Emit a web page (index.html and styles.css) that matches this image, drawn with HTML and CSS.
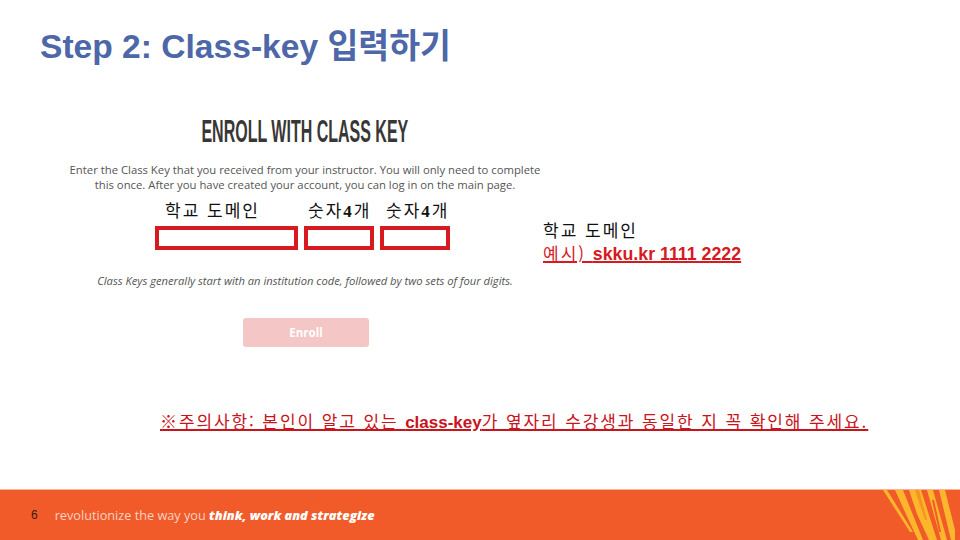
FILE: index.html
```html
<!DOCTYPE html>
<html lang="ko">
<head>
<meta charset="utf-8">
<title>Step 2: Class-key 입력하기</title>
<link rel="stylesheet" href="styles.css">
</head>
<body>
<div class="slide">
  <h1 class="title">Step 2: Class-key 입력하기</h1>
  <div class="main">
    <div class="enroll">
      <h2 class="enroll-title"><span class="enroll-text">ENROLL WITH CLASS KEY</span></h2>
      <p class="intro">Enter the Class Key that you received from your instructor. You will only need to complete<br>this once. After you have created your account, you can log in on the main page.</p>
      <div class="keygrid">
        <span class="lab lab-domain">학교 도메인</span>
        <span class="lab lab-num">숫자<b>4</b>개</span>
        <span class="lab lab-num2">숫자<b>4</b>개</span>
        <span class="box"></span>
        <span class="box"></span>
        <span class="box"></span>
      </div>
      <p class="hint">Class Keys generally start with an institution code, followed by two sets of four digits.</p>
      <div class="btn-row"><span class="btn">Enroll</span></div>
    </div>
    <div class="annot">
      <div class="annot-title">학교 도메인</div>
      <div class="annot-ex"><span class="ko">예시)</span> <b>skku.kr 1111 2222</b></div>
    </div>
  </div>
  <p class="note">※주의사항: 본인이 알고 있는 <b>class-key</b>가 옆자리 수강생과 동일한 지 꼭 확인해 주세요.</p>
  <div class="footer">
    <span class="page">6</span>
    <span class="slogan">revolutionize the way you <b>think, work and strategize</b></span>
    <svg class="brush" width="80" height="50" viewBox="0 0 80 50">
      <polygon points="8,0 12,0 38,42 35,42" fill="#fcb62c"/>
      <polygon points="20,0 28,0 48,50 43,50 30,22" fill="#fcb62c"/>
      <polygon points="34,0 46,0 62,50 54,50 42,24" fill="#fcb62c"/>
      <polygon points="40,0 44,0 52,30 50,30" fill="#f7931e"/>
      <polygon points="52,0 58,0 72,50 66,50" fill="#fcb62c"/>
      <polygon points="64,0 70,0 80,40 80,50 76,50" fill="#fcb62c"/>
      <polygon points="57,10 59,10 66,42 64,42" fill="#f15a29"/>
    </svg>
  </div>
</div>
</body>
</html>
```

FILE: styles.css
```css
html, body {
  margin: 0;
  padding: 0;
  background: #ffffff;
}

.slide {
  width: 960px;
  height: 540px;
  overflow: hidden;
  display: flex;
  flex-direction: column;
  background: #ffffff;
  font-family: "Liberation Sans", Arial, sans-serif;
}

.title {
  margin: 0;
  padding: 27px 0 0 40px;
  font-family: "Liberation Sans", "Noto Sans CJK KR", sans-serif;
  font-size: 33.6px;
  line-height: 40px;
  font-weight: bold;
  color: #4d67a8;
}

.main {
  display: flex;
  margin-top: 49px;
}

.enroll {
  width: 470px;
  margin-left: 70px;
  text-align: center;
}

.enroll-title {
  margin: 0;
  font-family: "Liberation Sans", sans-serif;
  font-weight: bold;
  font-size: 32px;
  line-height: 30px;
  color: #393736;
}

.enroll-text {
  display: inline-block;
  transform: scaleX(0.5);
  transform-origin: center;
  white-space: nowrap;
}

.intro {
  margin: 16px -15px 0;
  font-family: "Open Sans", sans-serif;
  font-size: 11.3px;
  line-height: 15px;
  color: #555555;
  white-space: nowrap;
}

.keygrid {
  display: grid;
  grid-template-columns: 143px 70px 70px;
  grid-template-rows: 22px 24px;
  column-gap: 6px;
  row-gap: 5px;
  margin: 7px 0 0 85px;
  text-align: left;
}

.lab {
  font-family: "Noto Sans CJK KR", sans-serif;
  font-size: 17px;
  line-height: 22px;
  letter-spacing: 2px;
  color: #111111;
  white-space: nowrap;
}

.lab b {
  font-family: "Liberation Serif", serif;
  font-weight: bold;
}

.lab-domain { padding-left: 10px; }
.lab-num { padding-left: 4px; }
.lab-num2 { padding-left: 6px; }

.box {
  box-sizing: border-box;
  height: 24px;
  border: 4px solid #d61a1f;
  background: #ffffff;
}

.hint {
  margin: 24px -15px 0;
  font-family: "Open Sans", sans-serif;
  font-style: italic;
  font-size: 11.2px;
  line-height: 14px;
  color: #555555;
  white-space: nowrap;
}

.btn-row {
  display: flex;
  justify-content: center;
  margin-top: 30px;
}

.btn {
  width: 126px;
  height: 29px;
  line-height: 29px;
  border-radius: 3px;
  background: #f5c6c6;
  color: #ffffff;
  font-family: "Open Sans", sans-serif;
  font-size: 11.5px;
  font-weight: bold;
  text-align: center;
  margin-left: 2px;
}

.annot {
  margin-left: 3px;
  padding-top: 102px;
  font-family: "Noto Sans CJK KR", sans-serif;
  font-size: 17px;
  line-height: 23px;
  letter-spacing: 2px;
}

.annot-title {
  color: #111111;
}

.annot-ex {
  color: #d61a1f;
  text-decoration: underline;
  text-decoration-thickness: 2px;
  white-space: nowrap;
}

.annot-ex b {
  font-family: "Liberation Sans", sans-serif;
  font-size: 17.8px;
  letter-spacing: 0;
}

.note {
  margin: 63px 0 0 160px;
  font-family: "Noto Sans CJK KR", sans-serif;
  font-size: 17px;
  line-height: 22px;
  letter-spacing: 1.9px;
  color: #c8141b;
  text-decoration: underline;
  text-decoration-thickness: 2px;
  white-space: nowrap;
}

.note b {
  font-family: "Liberation Sans", sans-serif;
  letter-spacing: 0;
}

.footer {
  margin-top: auto;
  height: 50px;
  background: #f15a29;
  border-top: 1px solid #f6b49a;
  display: flex;
  align-items: center;
  position: relative;
}

.page {
  margin-left: 31px;
  font-family: "Liberation Sans", sans-serif;
  font-size: 12px;
  color: #3a1a10;
}

.slogan {
  margin-left: 17px;
  font-family: "Open Sans", sans-serif;
  font-size: 12.7px;
  color: #fbd2c2;
}

.slogan b {
  font-style: italic;
  font-weight: 800;
  color: #ffffff;
}

.brush {
  position: absolute;
  right: 5px;
  top: 0;
}
```
